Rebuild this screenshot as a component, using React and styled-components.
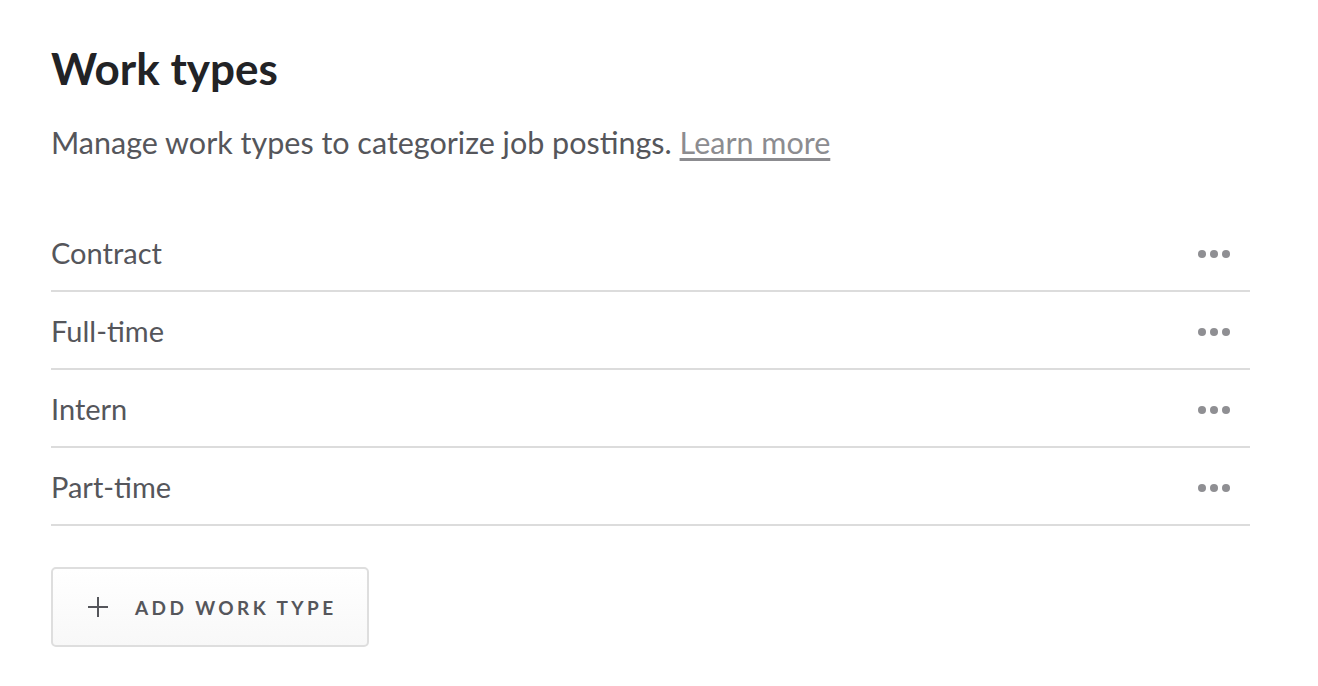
import React from 'react';
import styled, { createGlobalStyle } from 'styled-components';

const Global = createGlobalStyle`
  body {
    margin: 0;
    background: #fff;
    font-family: 'Lato', 'Noto Sans', sans-serif;
  }
`;

const Page = styled.div`
  padding: 40px 68px 40px 51px;
  display: flex;
  flex-direction: column;
`;

const Title = styled.h1`
  margin: 0;
  font-size: 44px;
  line-height: 56px;
  font-weight: 700;
  color: #222326;
`;

const Lead = styled.p`
  margin: 28px 0 54px;
  font-size: 30.5px;
  line-height: 36px;
  color: #55565b;
`;

const LearnMore = styled.a`
  color: #8c8c90;
  text-decoration: underline;
  text-underline-offset: 4px;
  cursor: pointer;
`;

const List = styled.div`
  display: flex;
  flex-direction: column;
  width: 1199px;
`;

const Row = styled.div`
  display: flex;
  align-items: center;
  justify-content: space-between;
  height: 76px;
  border-bottom: 2px solid #dcdcdc;
  font-size: 29px;
  color: #55565b;
  padding-right: 20px;
`;

const Dots = styled.div`
  display: flex;
  gap: 4px;
  margin-top: 3px;
  cursor: pointer;
`;

const Dot = styled.span`
  width: 8px;
  height: 8px;
  border-radius: 50%;
  background: #8f8f93;
`;

const AddButton = styled.button`
  margin-top: 41px;
  align-self: flex-start;
  display: flex;
  align-items: center;
  gap: 26px;
  height: 80px;
  padding: 0 30px 0 34px;
  border: 2px solid #dedede;
  border-radius: 5px;
  background: linear-gradient(#ffffff, #f8f8f8);
  font-family: inherit;
  font-size: 19px;
  font-weight: 700;
  letter-spacing: 3.4px;
  color: #55565b;
  cursor: pointer;
`;

const types = ['Contract', 'Full-time', 'Intern', 'Part-time'];

export default function App() {
  return (
    <>
      <Global />
      <Page>
        <Title>Work types</Title>
        <Lead>
          Manage work types to categorize job postings. <LearnMore>Learn more</LearnMore>
        </Lead>
        <List>
          {types.map(t => (
            <Row key={t}>
              {t}
              <Dots><Dot /><Dot /><Dot /></Dots>
            </Row>
          ))}
        </List>
        <AddButton>
          <svg width="22" height="22" viewBox="0 0 22 22">
            <path d="M11 1v20M1 11h20" stroke="#55565b" strokeWidth="2" />
          </svg>
          ADD WORK TYPE
        </AddButton>
      </Page>
    </>
  );
}
